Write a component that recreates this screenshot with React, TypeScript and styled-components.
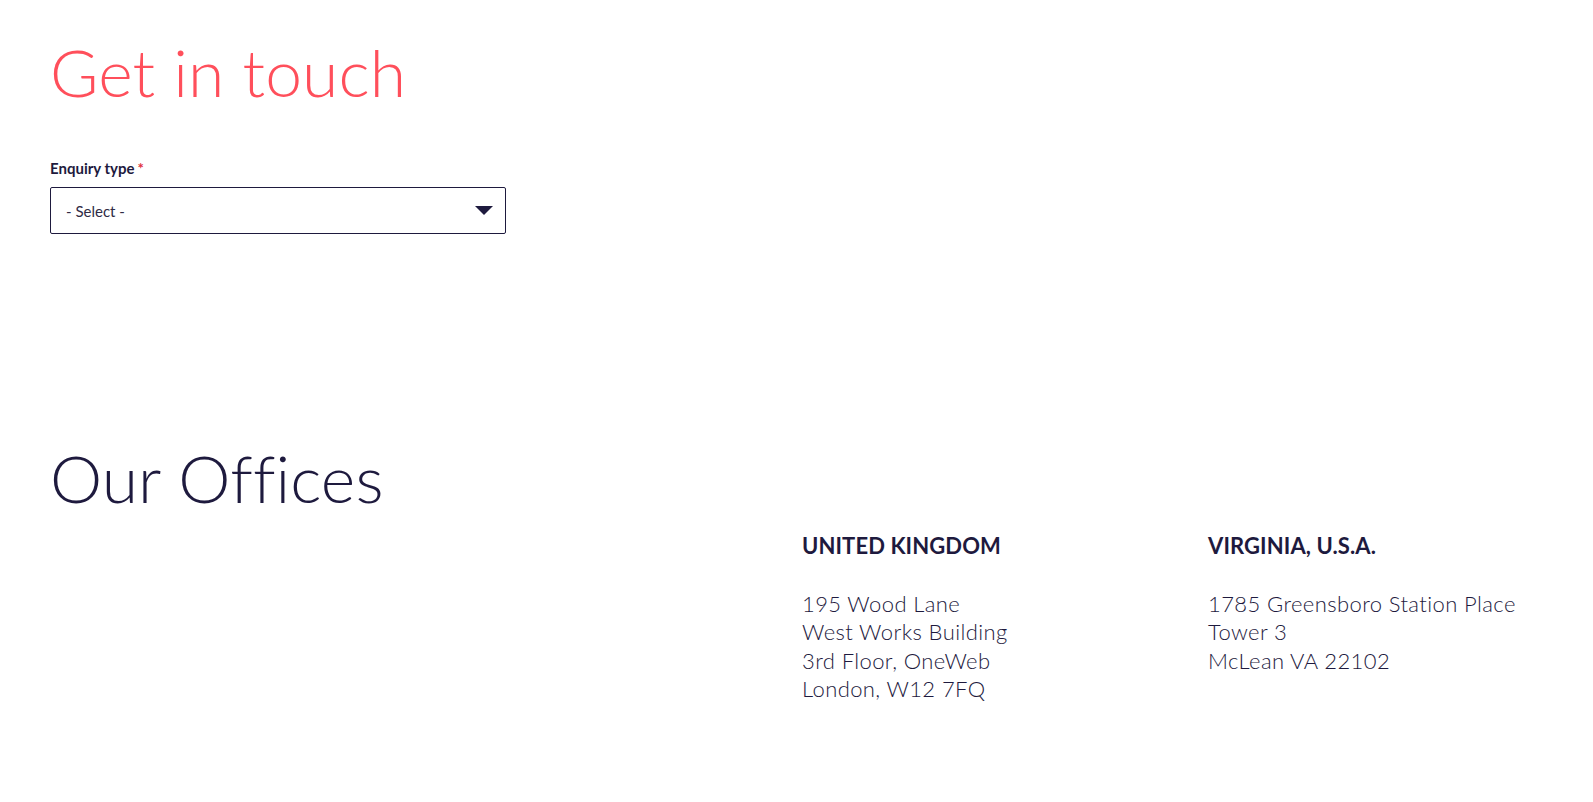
import React from "react";
import styled, { createGlobalStyle } from "styled-components";

const GlobalStyle = createGlobalStyle`
  html, body { margin: 0; padding: 0; background: #ffffff; }
  body { font-family: Lato, "Open Sans", sans-serif; color: #1e1a3e; }
  * { box-sizing: border-box; }
`;

const Page = styled.main`
  padding: 32px 50px 80px 50px;
  display: flex;
  flex-direction: column;
`;

const Title = styled.h1<{ $accent?: boolean }>`
  margin: 0;
  font-family: Lato, sans-serif;
  font-weight: 300;
  font-size: 66px;
  line-height: 80px;
  letter-spacing: 0.1px;
  color: ${(p) => (p.$accent ? "#ff4f5b" : "#1e1a3e")};
`;

const Form = styled.form`
  margin-top: 47px;
  display: flex;
  flex-direction: column;
  gap: 10px;
  width: 456px;
`;

const Label = styled.label`
  font-family: Lato, sans-serif;
  font-weight: 700;
  font-size: 15px;
  line-height: 18px;
  color: #1e1a3e;
`;

const Required = styled.span`
  color: #e0313f;
  margin-left: 3px;
`;

const SelectBox = styled.div`
  height: 47px;
  border: 1px solid #1e1a3e;
  border-radius: 2px;
  display: flex;
  align-items: center;
  justify-content: space-between;
  padding: 0 12px 0 15px;
  cursor: pointer;
`;

const SelectText = styled.span`
  font-family: Lato, sans-serif;
  font-size: 15px;
  line-height: 18px;
  color: #2f2b45;
`;

const Offices = styled.section`
  margin-top: 204px;
  display: flex;
  flex-direction: column;
`;

const OfficeGrid = styled.div`
  margin-top: 15px;
  display: grid;
  grid-template-columns: 752px 406px 1fr;
`;

const Office = styled.div<{ $col: number }>`
  grid-column: ${(p) => p.$col};
  display: flex;
  flex-direction: column;
  gap: 31px;
`;

const OfficeName = styled.h3`
  margin: 0;
  font-family: Lato, sans-serif;
  font-weight: 700;
  font-size: 22px;
  line-height: 26px;
  letter-spacing: 0.1px;
  color: #1e1a3e;
`;

const Address = styled.address`
  font-style: normal;
  font-family: Lato, sans-serif;
  font-weight: 300;
  font-size: 22px;
  line-height: 28.4px;
  letter-spacing: 0.4px;
  color: #1e1a3e;
  display: flex;
  flex-direction: column;
`;

const offices = [
  {
    name: "UNITED KINGDOM",
    lines: ["195 Wood Lane", "West Works Building", "3rd Floor, OneWeb", "London, W12 7FQ"],
  },
  {
    name: "VIRGINIA, U.S.A.",
    lines: ["1785 Greensboro Station Place", "Tower 3", "McLean VA 22102"],
  },
];

export default function App() {
  return (
    <>
      <GlobalStyle />
      <Page>
        <Title $accent>Get in touch</Title>
        <Form onSubmit={(e) => e.preventDefault()}>
          <Label>
            Enquiry type<Required>*</Required>
          </Label>
          <SelectBox role="combobox">
            <SelectText>- Select -</SelectText>
            <svg width="18" height="9" viewBox="0 0 18 9" aria-hidden="true">
              <polygon points="0,0 18,0 9,9" fill="#1e1a3e" />
            </svg>
          </SelectBox>
        </Form>
        <Offices>
          <Title>Our Offices</Title>
          <OfficeGrid>
            {offices.map((o, i) => (
              <Office key={o.name} $col={i + 2}>
                <OfficeName>{o.name}</OfficeName>
                <Address>
                  {o.lines.map((l) => (
                    <span key={l}>{l}</span>
                  ))}
                </Address>
              </Office>
            ))}
          </OfficeGrid>
        </Offices>
      </Page>
    </>
  );
}
